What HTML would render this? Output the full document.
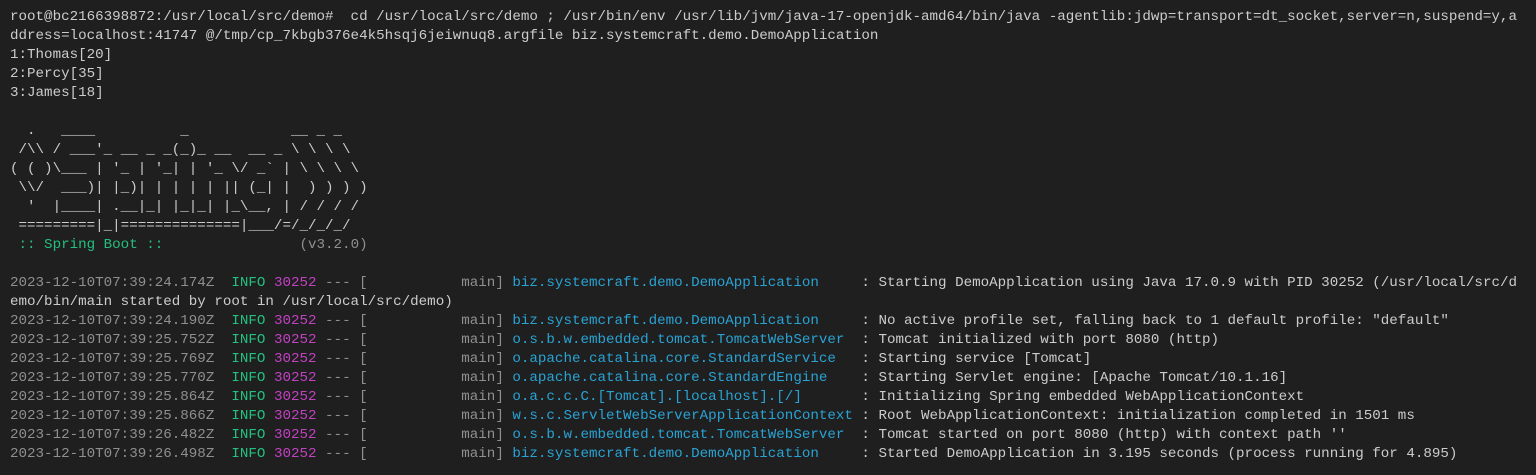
<!DOCTYPE html>
<html><head><meta charset="utf-8"><style>
html,body{margin:0;padding:0;background:#1f1f1f;width:1536px;height:475px;overflow:hidden}
pre{margin:0;padding:8px 0 0 10px;font-family:"Liberation Mono",monospace;font-size:14.2px;line-height:18.98px;color:#cccccc;white-space:pre}
.t{color:#8f8f8f}.g{color:#23c07f}.m{color:#c341c3}.c{color:#29a3d4}.v{color:#8f8f8f}
</style></head><body><pre>root@bc2166398872:/usr/local/src/demo#  cd /usr/local/src/demo ; /usr/bin/env /usr/lib/jvm/java-17-openjdk-amd64/bin/java -agentlib:jdwp=transport=dt_socket,server=n,suspend=y,a
ddress=localhost:41747 @/tmp/cp_7kbgb376e4k5hsqj6jeiwnuq8.argfile biz.systemcraft.demo.DemoApplication
1:Thomas[20]
2:Percy[35]
3:James[18]

  .   ____          _            __ _ _
 /\\ / ___'_ __ _ _(_)_ __  __ _ \ \ \ \
( ( )\___ | '_ | '_| | '_ \/ _` | \ \ \ \
 \\/  ___)| |_)| | | | | || (_| |  ) ) ) )
  '  |____| .__|_| |_|_| |_\__, | / / / /
 =========|_|==============|___/=/_/_/_/
<span class="g"> :: Spring Boot :: </span>             <span class="v">  (v3.2.0)</span>

<span class="t">2023-12-10T07:39:24.174Z</span>  <span class="g">INFO</span> <span class="m">30252</span> <span class="t">--- [           main]</span> <span class="c">biz.systemcraft.demo.DemoApplication    </span> : Starting DemoApplication using Java 17.0.9 with PID 30252 (/usr/local/src/d
emo/bin/main started by root in /usr/local/src/demo)
<span class="t">2023-12-10T07:39:24.190Z</span>  <span class="g">INFO</span> <span class="m">30252</span> <span class="t">--- [           main]</span> <span class="c">biz.systemcraft.demo.DemoApplication    </span> : No active profile set, falling back to 1 default profile: "default"
<span class="t">2023-12-10T07:39:25.752Z</span>  <span class="g">INFO</span> <span class="m">30252</span> <span class="t">--- [           main]</span> <span class="c">o.s.b.w.embedded.tomcat.TomcatWebServer </span> : Tomcat initialized with port 8080 (http)
<span class="t">2023-12-10T07:39:25.769Z</span>  <span class="g">INFO</span> <span class="m">30252</span> <span class="t">--- [           main]</span> <span class="c">o.apache.catalina.core.StandardService  </span> : Starting service [Tomcat]
<span class="t">2023-12-10T07:39:25.770Z</span>  <span class="g">INFO</span> <span class="m">30252</span> <span class="t">--- [           main]</span> <span class="c">o.apache.catalina.core.StandardEngine   </span> : Starting Servlet engine: [Apache Tomcat/10.1.16]
<span class="t">2023-12-10T07:39:25.864Z</span>  <span class="g">INFO</span> <span class="m">30252</span> <span class="t">--- [           main]</span> <span class="c">o.a.c.c.C.[Tomcat].[localhost].[/]      </span> : Initializing Spring embedded WebApplicationContext
<span class="t">2023-12-10T07:39:25.866Z</span>  <span class="g">INFO</span> <span class="m">30252</span> <span class="t">--- [           main]</span> <span class="c">w.s.c.ServletWebServerApplicationContext</span> : Root WebApplicationContext: initialization completed in 1501 ms
<span class="t">2023-12-10T07:39:26.482Z</span>  <span class="g">INFO</span> <span class="m">30252</span> <span class="t">--- [           main]</span> <span class="c">o.s.b.w.embedded.tomcat.TomcatWebServer </span> : Tomcat started on port 8080 (http) with context path ''
<span class="t">2023-12-10T07:39:26.498Z</span>  <span class="g">INFO</span> <span class="m">30252</span> <span class="t">--- [           main]</span> <span class="c">biz.systemcraft.demo.DemoApplication    </span> : Started DemoApplication in 3.195 seconds (process running for 4.895)
</pre></body></html>
